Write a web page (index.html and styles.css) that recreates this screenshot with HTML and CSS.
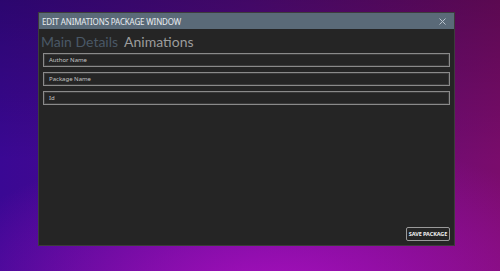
FILE: index.html
```html
<!DOCTYPE html>
<html lang="en">
<head>
    <meta charset="UTF-8">
    <title>Edit Animations Package Window</title>
    <link rel="stylesheet" href="styles.css">
</head>
<body>
    <div class="window">
        <div class="title-bar">
            <span class="title">EDIT ANIMATIONS PACKAGE WINDOW</span>
            <svg class="close" width="7" height="7" viewBox="0 0 7 7">
                <path d="M0.5 0.5 L6.5 6.5 M6.5 0.5 L0.5 6.5" stroke="#b8c2cc" stroke-width="1"/>
            </svg>
        </div>
        <div class="tabs">
            <span class="tab">Main Details</span>
            <span class="tab active">Animations</span>
        </div>
        <div class="fields">
            <div class="field">Author Name</div>
            <div class="field">Package Name</div>
            <div class="field">Id</div>
        </div>
        <div class="footer">
            <button class="save">SAVE PACKAGE</button>
        </div>
    </div>
</body>
</html>
```
FILE: styles.css
```css
html, body {
    height: 100%;
}
body {
    margin: 0;
    font-family: 'Noto Sans', 'Open Sans', sans-serif;
    background:
        radial-gradient(ellipse 70% 60% at 55% 110%, rgba(176, 16, 196, 0.9) 0%, rgba(176, 16, 196, 0) 100%),
        linear-gradient(180deg, rgba(0, 0, 0, 0.25) 0%, rgba(0, 0, 0, 0) 60%),
        linear-gradient(90deg, #3a0894 0%, #580a88 50%, #7a0c6c 100%);
    padding: 12px 0 0 38px;
    box-sizing: border-box;
}
.window {
    width: 417px;
    height: 234px;
    background-color: #252525;
    border: 1px solid #3c3c3c;
    box-sizing: border-box;
    display: flex;
    flex-direction: column;
}
.title-bar {
    height: 16px;
    background-color: #5a6a78;
    display: flex;
    align-items: center;
    justify-content: space-between;
    padding: 0 8px 0 3px;
    flex-shrink: 0;
}
.title {
    color: #e8ecf0;
    font-size: 8px;
    font-weight: 400;
    letter-spacing: -0.15px;
}
.tabs {
    display: flex;
    gap: 6px;
    padding: 0 0 0 2px;
    height: 24px;
    align-items: center;
}
.tab {
    font-family: Lato, 'Noto Sans', sans-serif;
    font-size: 14px;
    color: #4a5866;
}
.tab.active {
    color: #9c9c9c;
}
.fields {
    display: flex;
    flex-direction: column;
    gap: 5px;
    padding: 0 4px 0 4px;
}
.field {
    height: 14px;
    border: 1px solid #8a8a8a;
    box-shadow: inset 0 0 0 1px #3a3a3a;
    box-sizing: border-box;
    color: #c4c4c4;
    font-size: 6px;
    padding-left: 5px;
    display: flex;
    align-items: center;
}
.footer {
    margin-top: auto;
    display: flex;
    justify-content: flex-end;
    padding: 0 4px 4px 0;
}
.save {
    font-family: 'Noto Sans', sans-serif;
    background-color: #252525;
    color: #f0f0f0;
    border: 1px solid #9a9a9a;
    border-radius: 2px;
    font-size: 5.5px;
    font-weight: bold;
    height: 14px;
    width: 44px;
    padding: 0;
    letter-spacing: -0.1px;
}
```
